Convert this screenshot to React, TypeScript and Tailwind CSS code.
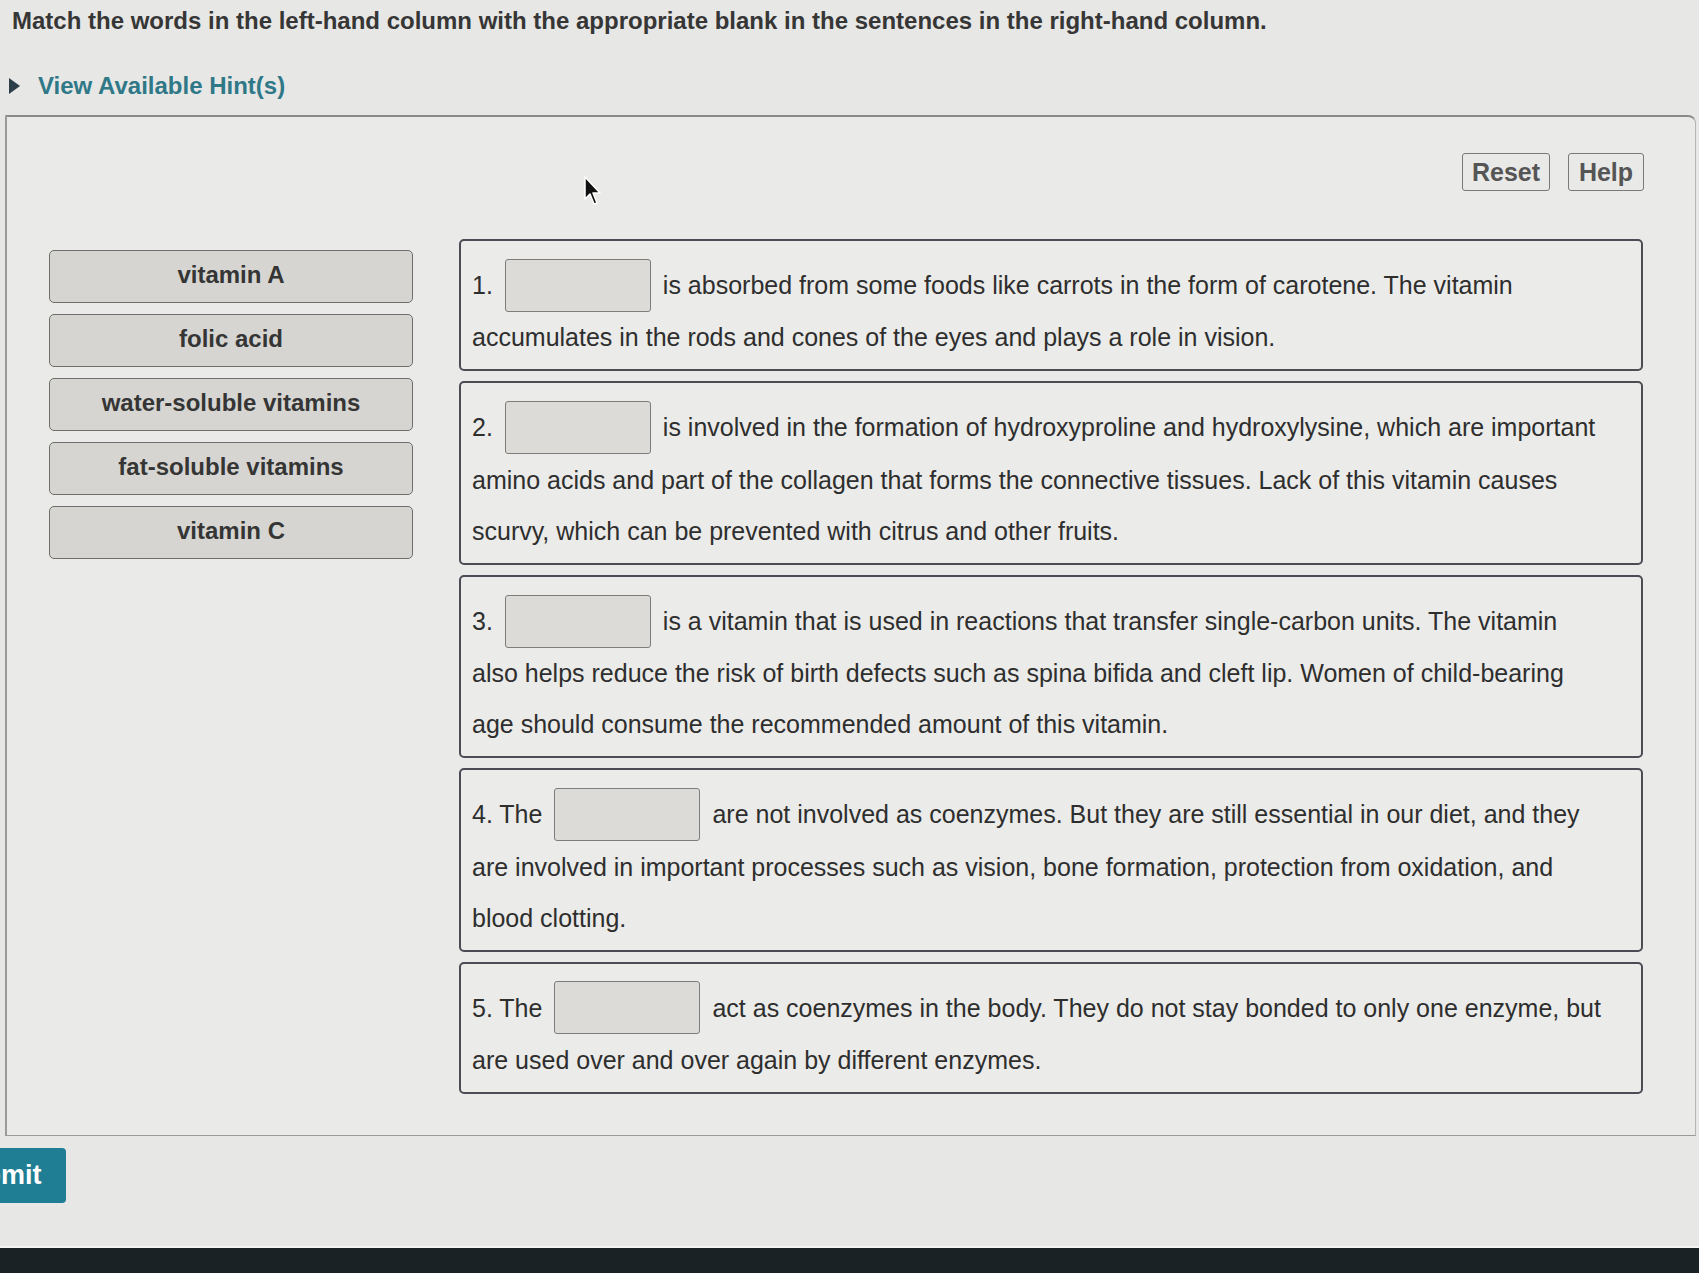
import React from 'react';

const chips = ['vitamin A', 'folic acid', 'water-soluble vitamins', 'fat-soluble vitamins', 'vitamin C'];

type Item = { num: string; first: string; rest: string[] };

const items: Item[] = [
  {
    num: '1.',
    first: 'is absorbed from some foods like carrots in the form of carotene. The vitamin',
    rest: ['accumulates in the rods and cones of the eyes and plays a role in vision.'],
  },
  {
    num: '2.',
    first: 'is involved in the formation of hydroxyproline and hydroxylysine, which are important',
    rest: [
      'amino acids and part of the collagen that forms the connective tissues. Lack of this vitamin causes',
      'scurvy, which can be prevented with citrus and other fruits.',
    ],
  },
  {
    num: '3.',
    first: 'is a vitamin that is used in reactions that transfer single-carbon units. The vitamin',
    rest: [
      'also helps reduce the risk of birth defects such as spina bifida and cleft lip. Women of child-bearing',
      'age should consume the recommended amount of this vitamin.',
    ],
  },
  {
    num: '4. The',
    first: 'are not involved as coenzymes. But they are still essential in our diet, and they',
    rest: [
      'are involved in important processes such as vision, bone formation, protection from oxidation, and',
      'blood clotting.',
    ],
  },
  {
    num: '5. The',
    first: 'act as coenzymes in the body. They do not stay bonded to only one enzyme, but',
    rest: ['are used over and over again by different enzymes.'],
  },
];

function Blank() {
  return (
    <span className="inline-block align-middle w-[146px] h-[53px] mx-[12px] bg-[#dcdbd7] border border-[#7d7d7d] rounded-[3px]" />
  );
}

function Sentence({ item }: { item: Item }) {
  return (
    <div className="pt-[15px] pb-[6px] px-[11px] bg-[#ebebe9] border-2 border-[#4c4c55] rounded-[5px] text-[25px] text-[#2e2e2e] whitespace-nowrap">
      <div className="leading-[54px]">
        <span className="align-middle">{item.num}</span>
        <Blank />
        <span className="align-middle">{item.first}</span>
      </div>
      {item.rest.map((line) => (
        <div key={line} className="leading-[51px]">
          {line}
        </div>
      ))}
    </div>
  );
}

export default function App() {
  return (
    <div className="relative flex flex-col h-[1273px] overflow-hidden bg-[#e7e7e5] font-['Liberation_Sans',Arial,sans-serif]">
      {/* question */}
      <h1 className="pt-[7px] pl-[12px] text-[24px] leading-[27px] font-bold text-[#363636]">
        Match the words in the left-hand column with the appropriate blank in the sentences in the right-hand column.
      </h1>

      <div className="flex items-center mt-[38px] pl-[8px] gap-[17px] text-[24px] leading-[27px] font-bold text-[#2f7888]">
        <svg width="13" height="18" viewBox="0 0 13 18">
          <path d="M1 1 L12 9 L1 17 Z" fill="#2c3f48" />
        </svg>
        <span>View Available Hint(s)</span>
      </div>

      {/* drag and drop area */}
      <div className="mt-[16px] ml-[5px] mr-[3px] pt-[36px] pb-[41px] bg-[#eaeae8] border-t-2 border-l-2 border-r border-b border-t-[#8a8a8a] border-l-[#9a9a9a] border-r-[#b5b5b5] border-b-[#9a9a9a] rounded-tr-[8px]">
        <div className="flex justify-end gap-[18px] pr-[51px]">
          <button className="w-[88px] h-[38px] text-[25px] font-bold text-[#555] bg-[#e9e9e7] border border-[#7a7a7a] rounded-[3px]">
            Reset
          </button>
          <button className="w-[76px] h-[38px] text-[25px] font-bold text-[#555] bg-[#e9e9e7] border border-[#7a7a7a] rounded-[3px]">
            Help
          </button>
        </div>

        <div className="flex items-start mt-[48px] pl-[42px]">
          <div className="flex flex-col gap-[11px] w-[364px] mt-[11px]">
            {chips.map((c) => (
              <div
                key={c}
                className="flex items-center justify-center h-[53px] pb-[4px] text-[24px] font-bold text-[#353535] bg-[#d6d5d1] border border-[#6e6e6e] rounded-[5px]"
              >
                {c}
              </div>
            ))}
          </div>

          <div className="flex flex-col gap-[10px] w-[1184px] ml-[46px]">
            {items.map((it) => (
              <Sentence key={it.num} item={it} />
            ))}
          </div>
        </div>
      </div>

      {/* submit */}
      <div className="mt-[12px]">
        <button className="ml-[-64px] h-[55px] pl-[14px] pr-[24px] text-[27px] font-bold text-white bg-[#1f7e93] rounded-[4px]">
          Submit
        </button>
      </div>

      <div className="mt-auto h-[2px] bg-[#f4f4f4]" />
      <div className="h-[25px] bg-[#1b2226]" />

      {/* mouse pointer */}
      <svg className="absolute left-[584px] top-[176px]" width="20" height="30" viewBox="0 0 20 30">
        <path d="M1 1 L1 23 L6 18 L10 28 L13 27 L9 17 L16 17 Z" fill="#111" stroke="#fff" strokeWidth="1.5" strokeLinejoin="round" />
      </svg>
    </div>
  );
}
